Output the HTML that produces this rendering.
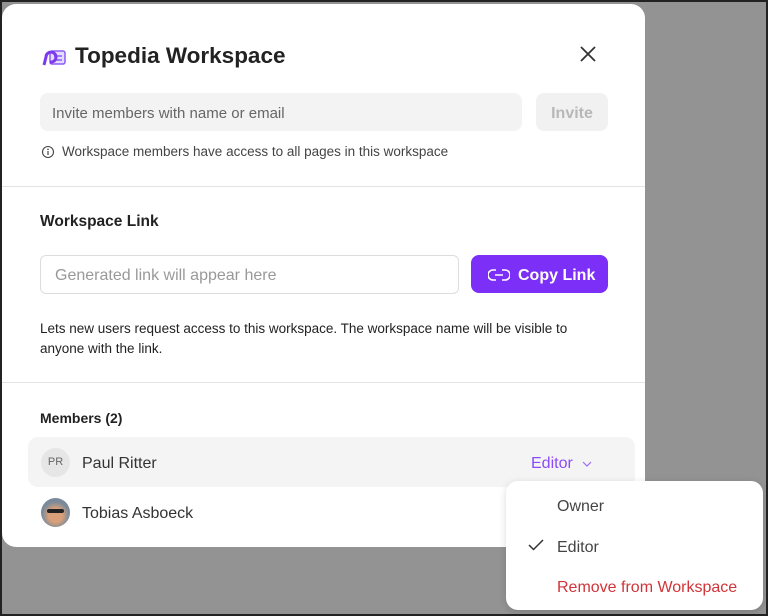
<!DOCTYPE html>
<html><head><style>
*{box-sizing:border-box;margin:0;padding:0}
body{width:768px;height:616px;overflow:hidden;background:#222;font-family:"Liberation Sans",sans-serif;position:relative}
.bg{position:absolute;left:2px;top:2px;width:764px;height:612px;background:#939393}
.dlg{position:absolute;left:2px;top:4px;width:643px;height:543px;background:#fff;border-radius:14px}
.abs{position:absolute}
.t{color:#222}
</style></head><body>
<div class="bg"></div>
<div class="dlg">
  <svg class="abs" style="left:39px;top:44px" width="26" height="20" viewBox="0 0 26 20"><rect x="9" y="3" width="15" height="13" rx="2" fill="#e4dcff" stroke="#8b5cf6" stroke-width="1.5"/><line x1="13" y1="8" x2="21" y2="8" stroke="#8b5cf6" stroke-width="1.5"/><line x1="13" y1="12" x2="21" y2="12" stroke="#8b5cf6" stroke-width="1.5"/><path d="M3 17 L5 9 A5 5 0 1 1 9 14" fill="none" stroke="#7c3aed" stroke-width="3"/></svg>
  <div class="abs t" style="left:73px;top:39px;font-size:22.5px;font-weight:bold;color:#222">Topedia Workspace</div>
  <svg class="abs" style="left:577px;top:41px" width="18" height="18" viewBox="0 0 18 18"><path d="M2 2L16 16M16 2L2 16" stroke="#333" stroke-width="1.8"/></svg>
  <div class="abs" style="left:38px;top:89px;width:482px;height:38px;background:#f3f3f3;border-radius:8px;color:#666;font-size:15px;padding:12px 12px 0">Invite members with name or email</div>
  <div class="abs" style="left:534px;top:89px;width:72px;height:38px;background:#f1f1f1;border-radius:8px;color:#b8b8b8;font-size:16px;font-weight:bold;text-align:center;line-height:42px">Invite</div>
  <svg class="abs" style="left:39px;top:141px" width="14" height="14" viewBox="0 0 14 14"><circle cx="7" cy="7" r="5.5" fill="none" stroke="#444" stroke-width="1.1"/><line x1="7" y1="6" x2="7" y2="10" stroke="#444" stroke-width="1.2"/><circle cx="7" cy="4.3" r=".8" fill="#444"/></svg>
  <div class="abs" style="left:60px;top:140px;font-size:13.5px;color:#444">Workspace members have access to all pages in this workspace</div>
  <div class="abs" style="left:0;top:182px;width:643px;height:1px;background:#e3e3e3"></div>
  <div class="abs t" style="left:38px;top:209px;font-size:15.5px;font-weight:bold">Workspace Link</div>
  <div class="abs" style="left:38px;top:251px;width:419px;height:39px;border:1px solid #ddd;border-radius:6px;color:#999;font-size:16px;padding:11px 14px 0">Generated link will appear here</div>
  <div class="abs" style="left:469px;top:251px;width:137px;height:38px;background:#7b2ff7;border-radius:8px;color:#fff;font-size:16px;font-weight:bold;line-height:41px;padding-left:47px">Copy Link</div>
  <svg class="abs" style="left:486px;top:264px" width="22" height="14" viewBox="0 0 22 14"><path d="M8 2H5a5 5 0 0 0 0 10h3M14 2h3a5 5 0 0 1 0 10h-3M7 7h8" fill="none" stroke="#fff" stroke-width="1.6"/></svg>
  <div class="abs" style="left:38px;top:315px;width:560px;font-size:13.5px;line-height:20px;color:#222">Lets new users request access to this workspace. The workspace name will be visible to anyone with the link.</div>
  <div class="abs" style="left:0;top:378px;width:643px;height:1px;background:#e3e3e3"></div>
  <div class="abs t" style="left:38px;top:406px;font-size:14px;font-weight:bold">Members (2)</div>
  <div class="abs" style="left:26px;top:433px;width:607px;height:50px;background:#f4f4f4;border-radius:10px"></div>
  <div class="abs" style="left:39px;top:444px;width:29px;height:29px;border-radius:50%;background:#e6e6e6;color:#666;font-size:11px;text-align:center;line-height:29px">PR</div>
  <div class="abs" style="left:80px;top:451px;font-size:16px;color:#333">Paul Ritter</div>
  <div class="abs" style="left:529px;top:451px;font-size:16px;color:#8b4cf7">Editor</div>
  <svg class="abs" style="left:580px;top:456px" width="10" height="8" viewBox="0 0 10 8"><path d="M1 2l4 4 4-4" fill="none" stroke="#9b6cf7" stroke-width="1.2"/></svg>
  <div class="abs" style="left:39px;top:494px;width:29px;height:29px;border-radius:50%;background:radial-gradient(circle at 50% 60%,#d9a07a 0 30%,#7a8a9a 60%);overflow:hidden"><div style="position:absolute;left:6px;top:11px;width:17px;height:4px;background:#222;border-radius:2px"></div></div>
  <div class="abs" style="left:80px;top:501px;font-size:16px;color:#333">Tobias Asboeck</div>
</div>
<div class="abs" style="left:506px;top:481px;width:257px;height:129px;background:#fff;border-radius:12px;box-shadow:0 2px 8px rgba(0,0,0,.15)">
  <div class="abs" style="left:51px;top:17px;font-size:16px;color:#444">Owner</div>
  <svg class="abs" style="left:22px;top:58px" width="16" height="12" viewBox="0 0 16 12"><path d="M1 6l4.5 4.5L15 1" fill="none" stroke="#333" stroke-width="1.5"/></svg>
  <div class="abs" style="left:51px;top:58px;font-size:16px;color:#444">Editor</div>
  <div class="abs" style="left:51px;top:98px;font-size:16px;color:#d13438">Remove from Workspace</div>
</div>
</body></html>
